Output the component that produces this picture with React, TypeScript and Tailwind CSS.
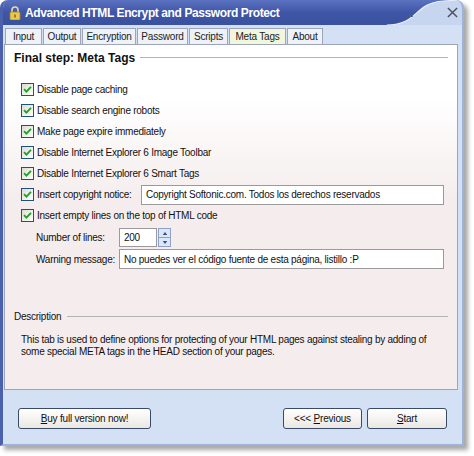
import React from "react";

const TABS = [
  { label: "Input", w: "w-[37px]" },
  { label: "Output", w: "w-[38px]" },
  { label: "Encryption", w: "w-[54px]" },
  { label: "Password", w: "w-[51px]" },
  { label: "Scripts", w: "w-[39px]" },
  { label: "Meta Tags", w: "w-[57px]", active: true },
  { label: "About", w: "w-[36px]" },
];

const OPTIONS = [
  "Disable page caching",
  "Disable search engine robots",
  "Make page expire immediately",
  "Disable Internet Explorer 6 Image Toolbar",
  "Disable Internet Explorer 6 Smart Tags",
];

function Check() {
  return (
    <span className="flex h-[13px] w-[13px] shrink-0 items-center justify-center border border-[#1c5180] bg-gradient-to-br from-[#dcdcd6] to-white">
      <svg viewBox="0 0 9 9" className="h-[9px] w-[9px]" aria-hidden>
        <path d="M1 4.2 L3.4 6.6 L8 1.8" fill="none" stroke="#21a121" strokeWidth="1.8" />
      </svg>
    </span>
  );
}

function LockIcon() {
  return (
    <svg viewBox="0 0 12 14" className="h-[14px] w-[12px]" aria-hidden>
      <path d="M3 6 V4 a3 3 0 0 1 6 0 V6" fill="none" stroke="#e8d9a0" strokeWidth="1.6" />
      <rect x="1" y="6" width="10" height="8" rx="1" fill="#e9c84a" stroke="#a6862a" strokeWidth="0.8" />
      <rect x="5.2" y="8.5" width="1.6" height="3" fill="#8a6a1a" />
    </svg>
  );
}

function Btn({ children, className }: { children: React.ReactNode; className: string }) {
  return (
    <button
      type="button"
      className={`flex h-[21px] items-center justify-center rounded-[3px] border border-[#3a4a6a] bg-gradient-to-b from-white to-[#ebe8e2] text-[10px] tracking-[-0.2px] text-[#111] ${className}`}
    >
      {children}
    </button>
  );
}

export default function App() {
  return (
    <div className="h-[456px] w-[474px] bg-white font-['Liberation_Sans',Arial,sans-serif]">
      <div className="flex h-[446px] w-[464px] flex-col overflow-hidden rounded-t-[8px] border-l-[3px] border-r-[2px] border-b-[2px] border-l-[#4b61ad] border-r-[#9fb2d8] border-b-[#9fb2d8] bg-[#d4e0f4] shadow-[4px_4px_4px_rgba(0,0,0,0.35)]">
        {/* Title bar */}
        <div className="relative flex h-[25px] shrink-0 items-center bg-gradient-to-b from-[#5a72bf] via-[#3f56a6] to-[#3a519f]">
          <svg viewBox="0 0 464 25" preserveAspectRatio="none" className="absolute inset-0 h-full w-full" aria-hidden>
            <path d="M388 25 C420 25 415 3 445 1 L464 0 L464 25 Z" fill="#c7d5ef" />
            <path d="M388 25 C420 25 415 3 445 1 L464 0" fill="none" stroke="#e8eefa" strokeWidth="1.2" />
          </svg>
          <div className="relative ml-[6px] flex items-center gap-[4px]">
            <LockIcon />
            <span className="text-[12px] font-bold tracking-[-0.4px] text-white">
              Advanced HTML Encrypt and Password Protect
            </span>
          </div>
          <span className="absolute left-[405px] top-[7px] text-[16px] font-bold leading-none text-[#555c6e]">-</span>
          <svg viewBox="0 0 12 12" className="absolute left-[444px] top-[7px] h-[11px] w-[11px]" aria-hidden>
            <path d="M1 1 L11 11 M11 1 L1 11" stroke="#4a5060" strokeWidth="1.6" />
          </svg>
        </div>

        {/* Tabs */}
        <div className="flex h-[19px] items-end pl-[2px] pt-[3px]">
          {TABS.map((t) => (
            <div
              key={t.label}
              className={`mr-[1px] flex h-[16px] items-center justify-center border border-b-0 border-[#9ca6b8] text-[10px] tracking-[-0.2px] text-[#222] ${t.w} ${
                t.active ? "bg-[#f1f7dc]" : "bg-[#eef1f6]"
              }`}
            >
              {t.label}
            </div>
          ))}
        </div>

        {/* Panel */}
        <div className="ml-[1px] mr-[4px] flex h-[346px] flex-col border border-[#9ca6b8] bg-gradient-to-b from-white from-15% to-[#f5eded] to-45% px-[9px] text-[10px] tracking-[-0.25px] text-[#111]">
          <div className="flex h-[25px] shrink-0 items-center gap-[5px]">
            <span className="text-[12px] font-bold tracking-normal">Final step: Meta Tags</span>
            <span className="h-px flex-1 bg-[#b4b4b4]" />
          </div>

          <div className="mt-[9px] flex flex-col pl-[7px]">
            {OPTIONS.map((o) => (
              <div key={o} className="flex h-[21px] items-center gap-[3px]">
                <Check />
                <span>{o}</span>
              </div>
            ))}
            <div className="flex h-[21px] items-center">
              <Check />
              <span className="ml-[3px] w-[104px]">Insert copyright notice:</span>
              <div className="flex h-[20px] w-[303px] items-center border border-[#9a9a9a] bg-white px-[4px]">
                Copyright Softonic.com. Todos los derechos reservados
              </div>
            </div>
            <div className="flex h-[21px] items-center gap-[3px]">
              <Check />
              <span>Insert empty lines on the top of HTML code</span>
            </div>
            <div className="mt-[2px] flex h-[19px] items-center pl-[15px]">
              <span className="w-[83px]">Number of lines:</span>
              <div className="flex h-[19px] w-[38px] items-center border border-[#9a9a9a] bg-white px-[4px]">200</div>
              <div className="ml-[1px] flex h-[19px] w-[13px] flex-col border border-[#8ea2c8] bg-[#dbe6f8]">
                <div className="flex flex-1 items-center justify-center border-b border-[#8ea2c8]">
                  <svg viewBox="0 0 6 4" className="h-[3px] w-[6px]" aria-hidden>
                    <path d="M0 4 L3 0 L6 4 Z" fill="#3a4f7a" />
                  </svg>
                </div>
                <div className="flex flex-1 items-center justify-center">
                  <svg viewBox="0 0 6 4" className="h-[3px] w-[6px]" aria-hidden>
                    <path d="M0 0 L3 4 L6 0 Z" fill="#3a4f7a" />
                  </svg>
                </div>
              </div>
            </div>
            <div className="mt-[2px] flex h-[20px] items-center pl-[15px]">
              <span className="w-[83px]">Warning message:</span>
              <div className="flex h-[20px] w-[325px] items-center border border-[#9a9a9a] bg-white px-[4px]">
                No puedes ver el código fuente de esta página, listillo :P
              </div>
            </div>
          </div>

          <div className="mt-[39px] flex h-[16px] items-center gap-[6px]">
            <span>Description</span>
            <span className="h-px flex-1 bg-[#b4b4b4]" />
          </div>
          <p className="mt-[10px] pl-[7px] leading-[12px]">
            This tab is used to define options for protecting of your HTML pages against stealing by adding of
            <br />
            some special META tags in the HEAD section of your pages.
          </p>
        </div>

        {/* Buttons */}
        <div className="mt-[18px] flex items-center pl-[15px] pr-[15px]">
          <Btn className="w-[133px]">
            <span className="underline">B</span>uy full version now!
          </Btn>
          <Btn className="ml-auto w-[79px]">
            &lt;&lt;&lt;&nbsp;<span className="underline">P</span>revious
          </Btn>
          <Btn className="ml-[5px] w-[80px]">
            <span className="underline">S</span>tart
          </Btn>
        </div>
      </div>
    </div>
  );
}
